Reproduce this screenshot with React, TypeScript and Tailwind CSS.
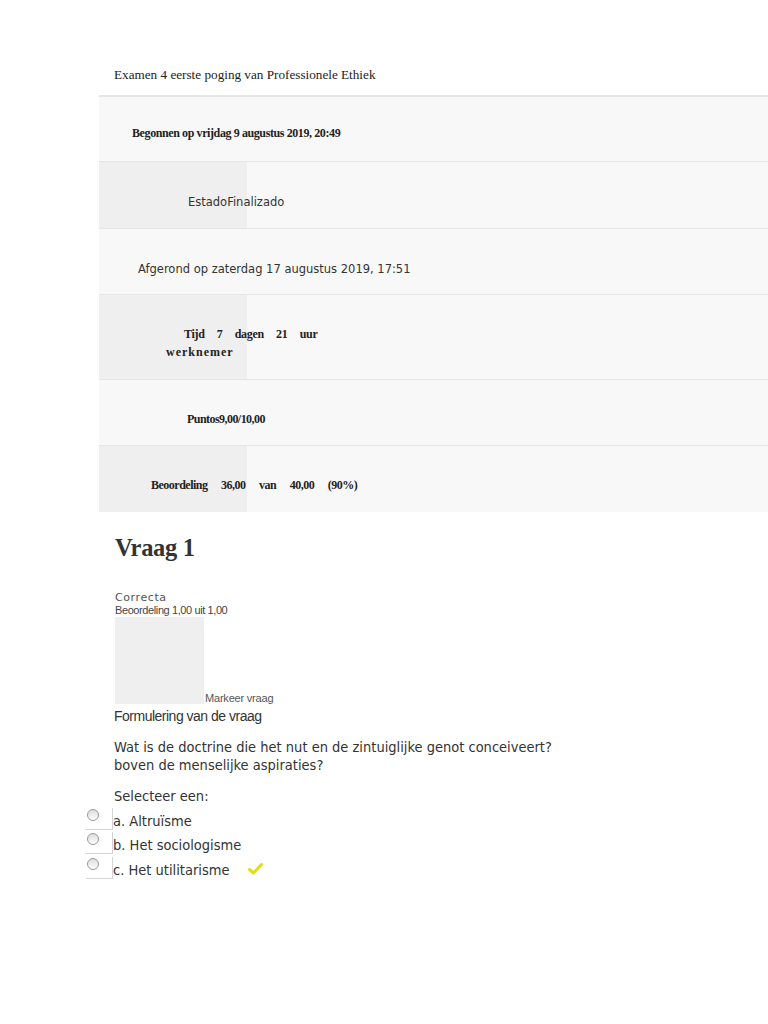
import React from 'react';

const serif = "font-['Liberation_Serif','Times_New_Roman',serif]";
const sans = "font-['DejaVu_Sans',Verdana,sans-serif]";
const cond = "font-['DejaVu_Sans_Condensed','DejaVu_Sans',Tahoma,sans-serif] font-stretch-condensed";
const arial = "font-['Liberation_Sans',Arial,sans-serif]";

const splitBg = 'bg-[linear-gradient(to_right,#efefef_148px,#f8f8f8_148px)]';

const options = [
  { label: 'a. Altruïsme', correct: false },
  { label: 'b. Het sociologisme', correct: false },
  { label: 'c. Het utilitarisme', correct: true },
];

const App: React.FC = () => {
  return (
    <div className="w-[768px] min-h-[1024px] bg-white text-[#222]">
      <div className={`${serif} text-[13.2px] pl-[114px] pt-[67px] h-[95px] leading-[16px]`}>
        Examen 4 eerste poging van Professionele Ethiek
      </div>

      <div className="ml-[99px] border-t-2 border-[#e6e6e6]">
        <div className="h-[64px] bg-[#f8f8f8] flex items-center pl-[33px] pt-[8px]">
          <span className={`${serif} font-bold text-[12px] tracking-[-0.4px] text-[#222]`}>
            Begonnen op vrijdag 9 augustus 2019, 20:49
          </span>
        </div>
        <div className={`h-[67px] border-t border-[#e6e6e6] ${splitBg} flex items-center pl-[89px] pt-[16px]`}>
          <span className={`${sans} text-[11.5px] text-[#333]`}>EstadoFinalizado</span>
        </div>
        <div className="h-[66px] border-t border-[#e6e6e6] bg-[#f8f8f8] flex items-center pl-[39px] pt-[16px]">
          <span className={`${sans} text-[11.5px] text-[#333]`}>Afgerond op zaterdag 17 augustus 2019, 17:51</span>
        </div>
        <div className={`h-[85px] border-t border-[#e6e6e6] ${splitBg} flex flex-col justify-center pt-[12px]`}>
          <div className={`${serif} font-bold text-[12px] text-[#222] leading-[18px]`}>
            <div className="pl-[85px] [word-spacing:9.5px] tracking-[-0.3px]">Tijd 7 dagen 21 uur</div>
            <div className="pl-[67px] tracking-[1px]">werknemer</div>
          </div>
        </div>
        <div className="h-[66px] border-t border-[#e6e6e6] bg-[#f8f8f8] flex items-center pl-[88px] pt-[12px]">
          <span className={`${serif} font-bold text-[12px] tracking-[-0.55px] text-[#222]`}>Puntos9,00/10,00</span>
        </div>
        <div className={`h-[67px] border-t border-[#e6e6e6] ${splitBg} flex items-center pl-[52px] pt-[12px]`}>
          <span className={`${serif} font-bold text-[12px] tracking-[-0.5px] [word-spacing:11px] text-[#222]`}>
            Beoordeling 36,00 van 40,00 (90%)
          </span>
        </div>
      </div>

      <div className="pl-[115px] pt-[21px]">
        <h2 className={`${serif} font-bold text-[24.5px] leading-[30px] text-[#333] tracking-[-0.3px]`}>Vraag 1</h2>
        <div className={`${sans} text-[11px] text-[#555] mt-[28px] leading-[13px] tracking-[0.6px]`}>Correcta</div>
        <div className={`${arial} text-[11px] text-[#444] leading-[13px] tracking-[-0.4px]`}>Beoordeling 1,00 uit 1,00</div>
        <div className="flex items-end">
          <div className="w-[89px] h-[87px] bg-[#efefef]" />
          <span className={`${arial} text-[11px] text-[#555] leading-[12px] ml-[1px] tracking-[-0.2px]`}>Markeer vraag</span>
        </div>
        <div className={`${arial} text-[14px] text-[#333] leading-[20px] tracking-[-0.5px] -ml-[1px] mt-[2px]`}>Formulering van de vraag</div>
        <p className={`${cond} text-[14.5px] text-[#333] leading-[18px] mt-[12px] -ml-[1px]`}>
          Wat is de doctrine die het nut en de zintuiglijke genot conceiveert?
          <br />
          boven de menselijke aspiraties?
        </p>
        <div className={`${cond} text-[14.5px] text-[#333] leading-[18px] mt-[13px] -ml-[1px]`}>Selecteer een:</div>
      </div>

      <div className="pl-[86px]">
        {options.map((o) => (
          <div key={o.label} className="flex items-end h-[24.5px]">
            <div className="w-[27px] h-[22px] border-r border-b border-[#d4d4d4] flex items-start justify-start pl-[1px] pt-[1px]">
              <span className="w-[12px] h-[12px] rounded-full border border-[#9a9a9a] bg-[linear-gradient(#dcdcdc,#ffffff)]" />
            </div>
            <span className={`${cond} text-[14.5px] text-[#333] leading-[18px]`}>{o.label}</span>
            {o.correct && (
              <svg width="15" height="12" viewBox="0 0 15 12" className="ml-[19px] mb-[4px]">
                <path d="M1.5 6.5 L5.5 10 L13.5 1.5" fill="none" stroke="#e5dd10" strokeWidth="3" strokeLinecap="round" strokeLinejoin="round" />
              </svg>
            )}
          </div>
        ))}
      </div>
    </div>
  );
};

export default App;
